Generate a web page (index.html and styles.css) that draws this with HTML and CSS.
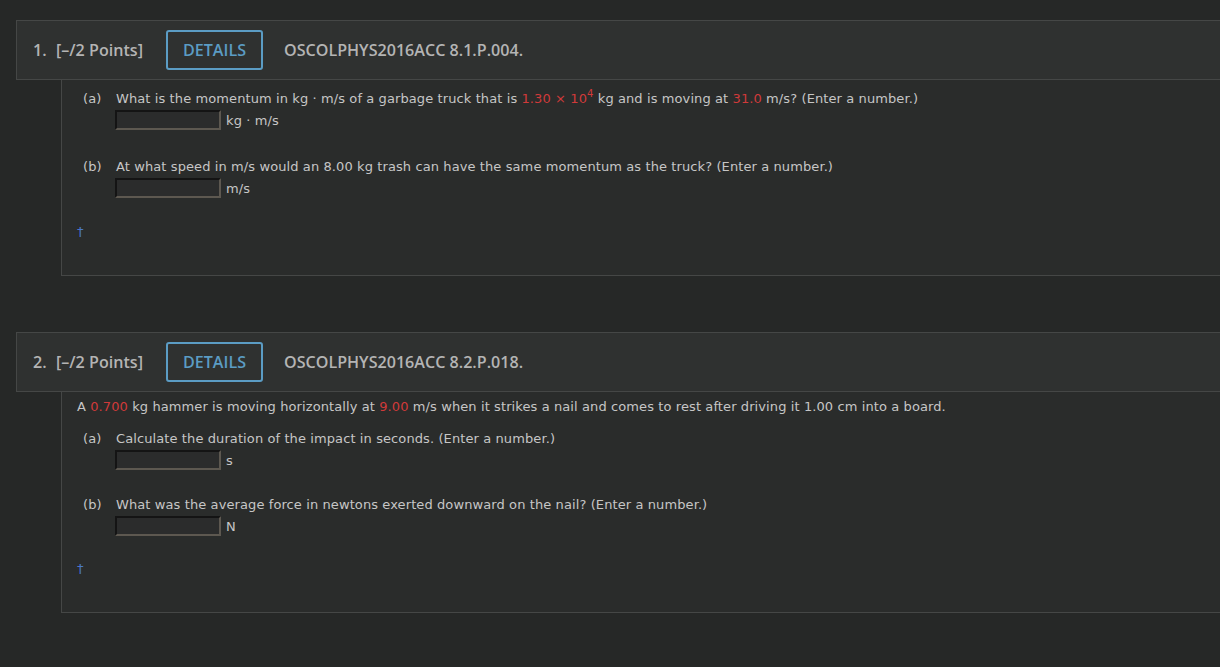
FILE: index.html
```html
<!DOCTYPE html>
<html>
<head>
<meta charset="utf-8">
<link rel="stylesheet" href="styles.css">
</head>
<body>
<div class="question">
  <div class="q-header">
    <span class="q-num">1.</span>
    <span class="q-points">[–/2 Points]</span>
    <span class="details">DETAILS</span>
    <span class="q-id">OSCOLPHYS2016ACC 8.1.P.004.</span>
  </div>
  <div class="q-body q1">
    <div class="part">
      <span class="part-label">(a)</span>
      <div class="part-main">
        <div class="part-text">What is the momentum in kg · m/s of a garbage truck that is <span class="red">1.30 × 10<sup>4</sup></span> kg and is moving at <span class="red">31.0</span> m/s? (Enter a number.)</div>
        <div class="answer"><span class="field"></span><span class="unit">kg · m/s</span></div>
      </div>
    </div>
    <div class="part">
      <span class="part-label">(b)</span>
      <div class="part-main">
        <div class="part-text">At what speed in m/s would an 8.00 kg trash can have the same momentum as the truck? (Enter a number.)</div>
        <div class="answer"><span class="field"></span><span class="unit">m/s</span></div>
      </div>
    </div>
    <div class="dagger">†</div>
  </div>
</div>
<div class="question">
  <div class="q-header">
    <span class="q-num">2.</span>
    <span class="q-points">[–/2 Points]</span>
    <span class="details">DETAILS</span>
    <span class="q-id">OSCOLPHYS2016ACC 8.2.P.018.</span>
  </div>
  <div class="q-body q2">
    <div class="intro">A <span class="red">0.700</span> kg hammer is moving horizontally at <span class="red">9.00</span> m/s when it strikes a nail and comes to rest after driving it 1.00 cm into a board.</div>
    <div class="part">
      <span class="part-label">(a)</span>
      <div class="part-main">
        <div class="part-text">Calculate the duration of the impact in seconds. (Enter a number.)</div>
        <div class="answer"><span class="field"></span><span class="unit">s</span></div>
      </div>
    </div>
    <div class="part">
      <span class="part-label">(b)</span>
      <div class="part-main">
        <div class="part-text">What was the average force in newtons exerted downward on the nail? (Enter a number.)</div>
        <div class="answer"><span class="field"></span><span class="unit">N</span></div>
      </div>
    </div>
    <div class="dagger">†</div>
  </div>
</div>
</body>
</html>
```
FILE: styles.css
```css
html, body {
  margin: 0;
  padding: 0;
}
body {
  background: #262827;
  padding: 20px 0 0 16px;
  overflow: hidden;
  font-family: "DejaVu Sans", Verdana, sans-serif;
}
.question {
  margin-bottom: 56px;
}
.q-header {
  height: 58px;
  border: 1px solid #454746;
  border-right: none;
  background: #2f3130;
  display: flex;
  align-items: center;
  padding-left: 16px;
  font-family: "Open Sans", "Noto Sans", sans-serif;
  font-weight: 600;
  font-size: 16.1px;
  color: #b4b4b4;
}
.q-num {
  width: 23px;
}
.q-points {
  width: 110px;
}
.details {
  box-sizing: border-box;
  width: 97px;
  height: 40px;
  border: 2px solid #5b9cc4;
  border-radius: 3px;
  color: #5b9cc4;
  display: flex;
  align-items: center;
  justify-content: center;
  margin-right: 21px;
}
.q-body {
  margin-left: 45px;
  border-left: 1px solid #454746;
  border-bottom: 1px solid #454746;
  background: #2a2c2b;
  padding: 11px 0 0 15px;
  font-size: 13px;
  letter-spacing: 0.1px;
  color: #c6c6c6;
  box-sizing: border-box;
}
.q1 {
  height: 196px;
}
.q2 {
  height: 221px;
  padding-top: 7px;
}
.intro {
  line-height: 16px;
  margin-bottom: 16px;
}
.part {
  display: flex;
  margin-left: 6px;
  margin-bottom: 28px;
}
.q2 .part {
  margin-bottom: 26px;
}
.part-label {
  width: 33px;
  line-height: 16px;
}
.part-text {
  line-height: 16px;
}
.answer {
  display: flex;
  align-items: center;
  height: 22px;
  margin-top: 2px;
  margin-left: -1px;
}
.field {
  box-sizing: border-box;
  width: 106px;
  height: 20px;
  border: 2px solid;
  border-color: #141414 #5d5850 #5d5850 #141414;
  background: #2b2c2c;
}
.unit {
  margin-left: 5px;
}
.red {
  color: #d03a3a;
}
sup {
  font-size: 10px;
  line-height: 0;
  vertical-align: 6px;
}
.dagger {
  color: #4a78c8;
  font-size: 13px;
  line-height: 16px;
  margin-top: -3px;
}
.q2 .dagger {
  margin-top: -2px;
}
```
